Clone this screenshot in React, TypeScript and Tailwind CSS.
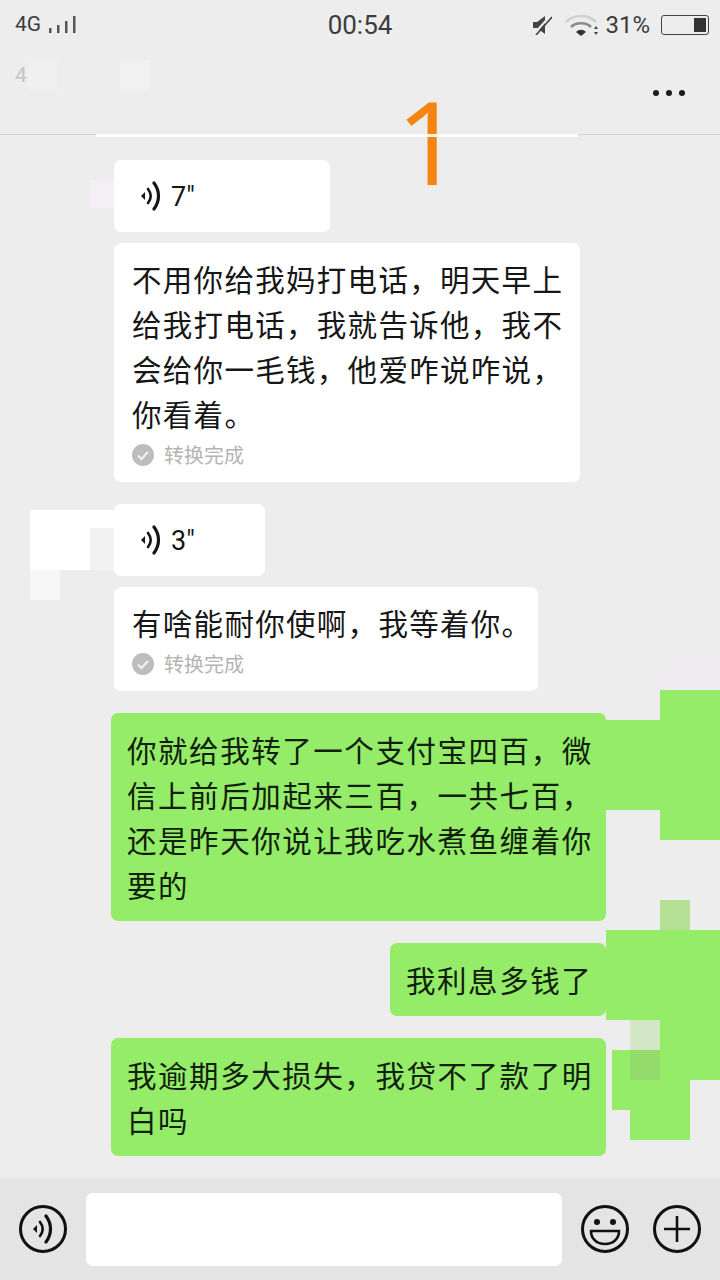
const CJK = "font-['Noto_Sans_CJK_SC','Noto_Sans',sans-serif]";

const VoiceIcon = ({ className }: { className?: string }): JSX.Element => (
  <svg viewBox="0 0 22 30" className={className} fill="none" stroke="currentColor" strokeLinecap="round">
    <path d="M1 15l4-4v8z" fill="currentColor" stroke="none" />
    <path d="M8 8c3.5 4.500 3.500 9.500 0 14" strokeWidth="2.6" />
    <path d="M14 2c6 8 6 18 0 26" strokeWidth="3.2" />
  </svg>
);

const VoiceBubble = ({ sec, width, className }: { sec: string; width: string; className?: string }): JSX.Element => (
  <div className={`${width} ${className} h-[72px] ml-[114px] bg-white rounded-[7px] flex items-center pl-[26px] text-[#161616]`}>
    <VoiceIcon className="w-[22px] h-[30px]" />
    <span className="ml-[9px] mt-[3px] text-[27px] leading-none font-['Roboto',sans-serif]">{sec}</span>
  </div>
);

const Converted = (): JSX.Element => (
  <div className="flex items-center h-[24px] mt-[7px]">
    <svg viewBox="0 0 22 22" className="w-[22px] h-[22px]">
      <circle cx="11" cy="11" r="11" fill="#bdbdbd" />
      <path d="M6 11.5l3.5 3.5 6.5-7" fill="none" stroke="#f2f2f2" strokeWidth="2.2" />
    </svg>
    <span className="ml-[10px] text-[20px] leading-none text-[#b4b4b4]">转换完成</span>
  </div>
);

const GreenBubble = ({ lines, className }: { lines: string[]; className?: string }): JSX.Element => (
  <div className={`${className} bg-[#95ec69] rounded-[7px] text-[#10200c] text-[29.5px] leading-[45px] tracking-[1.55px] px-[16px] pt-[14px] pb-[14px] whitespace-nowrap`}>
    {lines.map((line) => (
      <div key={line}>{line}</div>
    ))}
  </div>
);

const App = (): JSX.Element => {
  return (
    <div className={`relative w-[720px] h-[1280px] overflow-hidden bg-[#ededed] flex flex-col ${CJK}`}>
      {/* status bar */}
      <div className="h-[50px] flex items-center justify-between px-[15px] text-[#3c3c3c] font-['Roboto',sans-serif] shrink-0">
        <div className="flex items-center w-[200px] text-[21px]">
          <span>4G</span>
          <svg viewBox="0 0 30 20" className="w-[30px] h-[20px] ml-[7px]" fill="#555">
            <rect x="1" y="13" width="2.5" height="5" />
            <rect x="9" y="10" width="2.5" height="8" />
            <rect x="17" y="6" width="2.5" height="12" />
            <rect x="25" y="1" width="2.5" height="17" />
          </svg>
        </div>
        <span className="text-[26px] ml-[-4px]">00:54</span>
        <div className="flex items-center justify-end w-[200px] mr-[-4px]">
          <svg viewBox="0 0 20 20" className="w-[20px] h-[20px]" fill="#444">
            <path d="M1 7h4l8-6v18l-8-6H1z" />
            <path d="M2 19L18 1" stroke="#ededed" strokeWidth="2" />
            <path d="M4 20L20 2" stroke="#444" strokeWidth="1.6" />
          </svg>
          <svg viewBox="0 0 34 24" className="w-[34px] h-[24px] ml-[13px]" fill="none">
            <path d="M1 9c8-8 22-8 30 0" stroke="#cfcfcf" strokeWidth="2.5" />
            <path d="M6 14c5-5 15-5 20 0" stroke="#8a8a8a" strokeWidth="2.5" />
            <path d="M11 19c3-3 7-3 10 0l-5 4z" fill="#333" />
            <path d="M29 16l2-3 2 3zM29 19l2 3 2-3z" fill="#444" />
          </svg>
          <span className="text-[24px] ml-[6px]">31%</span>
          <div className="ml-[11px] w-[48px] h-[20px] border-[1.5px] border-[#444] rounded-[3px] flex justify-end p-[2px]">
            <div className="w-[12px] bg-[#333]" />
          </div>
        </div>
      </div>

      {/* title bar */}
      <div className="relative h-[85px] shrink-0 border-b border-[#d4d4d4] flex items-center justify-end pr-[35px]">
        <div className="flex gap-[7px] mt-[1px]">
          <span className="w-[6px] h-[6px] rounded-full bg-[#1c1c1c]" />
          <span className="w-[6px] h-[6px] rounded-full bg-[#1c1c1c]" />
          <span className="w-[6px] h-[6px] rounded-full bg-[#1c1c1c]" />
        </div>
      </div>

      {/* messages */}
      <div className="flex-1 flex flex-col pt-[25px] min-h-0">
        <VoiceBubble sec={'7"'} width="w-[216px]" />
        <div className="ml-[114px] mt-[11px] w-[466px] h-[239px] bg-white rounded-[7px] pl-[18px] pt-[13px] text-[#161616]">
          <div className="text-[29.5px] leading-[45px] tracking-[1.3px] whitespace-nowrap">
            <div>不用你给我妈打电话，明天早上</div>
            <div>给我打电话，我就告诉他，我不</div>
            <div>会给你一毛钱，他爱咋说咋说，</div>
            <div>你看着。</div>
          </div>
          <Converted />
        </div>
        <VoiceBubble sec={'3"'} width="w-[151px]" className="mt-[22px]" />
        <div className="ml-[114px] mt-[11px] w-[424px] h-[104px] bg-white rounded-[7px] pl-[18px] pt-[13px] text-[#161616]">
          <div className="text-[29.5px] leading-[45px] tracking-[1.3px] whitespace-nowrap">有啥能耐你使啊，我等着你。</div>
          <Converted />
        </div>
        <GreenBubble
          className="mt-[22px] ml-[111px] w-[495px]"
          lines={["你就给我转了一个支付宝四百，微", "信上前后加起来三百，一共七百，", "还是昨天你说让我吃水煮鱼缠着你", "要的"]}
        />
        <GreenBubble className="mt-[22px] ml-[390px] w-[216px]" lines={["我利息多钱了"]} />
        <GreenBubble className="mt-[22px] ml-[111px] w-[495px]" lines={["我逾期多大损失，我贷不了款了明", "白吗"]} />
      </div>

      {/* input bar */}
      <div className="h-[102px] shrink-0 bg-[#e4e4e4] flex items-start pt-[15px] text-[#111]">
        <div className="ml-[19px] mt-[12px] w-[48px] h-[48px] rounded-full border-[3px] border-[#111] flex items-center justify-center">
          <VoiceIcon className="w-[22px] h-[30px]" />
        </div>
        <div className="ml-[19px] w-[476px] h-[73px] bg-white rounded-[7px]" />
        <svg viewBox="0 0 48 48" className="ml-[19px] mt-[12px] w-[48px] h-[48px]" fill="none" stroke="#111" strokeWidth="3">
          <circle cx="24" cy="24" r="22.5" />
          <circle cx="16" cy="17" r="3" fill="#111" stroke="none" />
          <circle cx="32" cy="17" r="3" fill="#111" stroke="none" />
          <path d="M10 26h28c0 8-6 13-14 13s-14-5-14-13z" strokeWidth="2.6" />
        </svg>
        <svg viewBox="0 0 48 48" className="ml-[24px] mt-[12px] w-[48px] h-[48px]" fill="none" stroke="#111" strokeWidth="3">
          <circle cx="24" cy="24" r="22.5" />
          <path d="M24 11v26M11 24h26" strokeWidth="2.6" />
        </svg>
      </div>

      {/* orange number written over the shot */}
      <span className="absolute left-[396px] top-[70px] text-[116px] leading-[140px] font-medium text-[#f58410] font-['Open_Sans',sans-serif]">1</span>

      {/* mosaics hiding names and avatars */}
      <div className="absolute left-[96px] top-[134px] w-[482px] h-[3px] bg-white/90" />
      <div className="absolute left-[15px] top-[60px] text-[#c4c4c4] text-[21px] leading-[30px] font-['Roboto',sans-serif]">4</div>
      <div className="absolute left-[27px] top-[60px] w-[30px] h-[30px] bg-[#f0f0f0]" />
      <div className="absolute left-[120px] top-[60px] w-[30px] h-[30px] bg-[#f1f1f1]" />
      <div className="absolute left-[90px] top-[180px] w-[24px] h-[28px] bg-[#f3eff5]" />
      <div className="absolute left-[30px] top-[510px] w-[60px] h-[60px] bg-white" />
      <div className="absolute left-[30px] top-[570px] w-[30px] h-[30px] bg-[#f6f6f6]" />
      <div className="absolute left-[90px] top-[510px] w-[24px] h-[18px] bg-white" />
      <div className="absolute left-[90px] top-[528px] w-[24px] h-[42px] bg-[#f2f2f2]" />
      <div className="absolute left-[660px] top-[660px] w-[60px] h-[30px] bg-[#efecef]" />
      <div className="absolute left-[606px] top-[720px] w-[54px] h-[90px] bg-[#95ec69]" />
      <div className="absolute left-[660px] top-[690px] w-[60px] h-[150px] bg-[#95ec69]" />
      <div className="absolute left-[660px] top-[900px] w-[30px] h-[30px] bg-[#b5e095]" />
      <div className="absolute left-[606px] top-[930px] w-[114px] h-[90px] bg-[#95ec69]" />
      <div className="absolute left-[660px] top-[1020px] w-[60px] h-[60px] bg-[#95ec69]" />
      <div className="absolute left-[630px] top-[1020px] w-[30px] h-[30px] bg-[#d3e6c6]" />
      <div className="absolute left-[612px] top-[1050px] w-[48px] h-[60px] bg-[#95ec69]" />
      <div className="absolute left-[630px] top-[1050px] w-[30px] h-[30px] bg-[#93dc6c]" />
      <div className="absolute left-[660px] top-[1080px] w-[30px] h-[60px] bg-[#95ec69]" />
      <div className="absolute left-[630px] top-[1110px] w-[30px] h-[30px] bg-[#95ec69]" />
    </div>
  );
};

export default App;
